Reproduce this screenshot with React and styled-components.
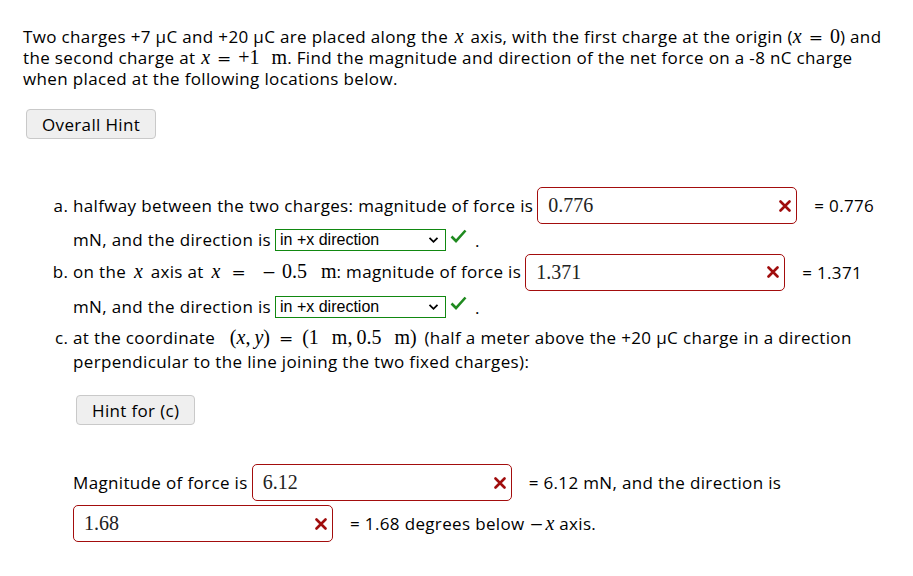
import React from "react";
import styled, { createGlobalStyle } from "styled-components";

const Global = createGlobalStyle`
  html, body { margin: 0; padding: 0; background: #fff; }
  body { font-family: "Open Sans", "Noto Sans", sans-serif; font-size: 17px; letter-spacing: 0.35px; color: #000; }
`;

const Page = styled.div`
  padding: 26px 23px 0 23px;
  width: 913px;
  box-sizing: border-box;
`;

const Intro = styled.p`
  margin: 0;
  line-height: 21px;
  width: 866px;
`;

const M = styled.span`
  font-family: ${(p) => (p.$op ? '"DejaVu Serif", serif' : '"Liberation Serif", "DejaVu Serif", serif')};
  font-size: ${(p) => (p.$op ? 17 : 20)}px;
  line-height: 1;
  letter-spacing: 0;
  font-style: ${(p) => (p.$i ? "italic" : "normal")};
  margin-left: ${(p) => p.$l || 0}px;
  margin-right: ${(p) => p.$r || 0}px;
`;

const HintButton = styled.button`
  font-family: inherit;
  font-size: 17px;
  letter-spacing: 0.35px;
  color: #000;
  background: #efefef;
  border: 1px solid #c9c9c9;
  border-radius: 4px;
  height: 30px;
  padding: 0 15px;
  margin: ${(p) => p.$m};
  display: block;
`;

const List = styled.ol`
  list-style: lower-alpha;
  margin: 48px 0 0 0;
  padding-left: 50px;
`;

const Item = styled.li``;

const Row = styled.div`
  display: flex;
  align-items: center;
  height: ${(p) => p.$h}px;
  margin-top: ${(p) => p.$mt || 0}px;
  white-space: nowrap;
`;

const Text = styled.span`
  line-height: 24px;
`;

const InputBox = styled.div`
  width: 260px;
  height: 37px;
  box-sizing: border-box;
  border: 1px solid #a30d0d;
  border-radius: 5px;
  display: flex;
  align-items: center;
  justify-content: space-between;
  padding: 0 5px 0 10px;
  margin-left: ${(p) => (p.$flush ? 0 : 4)}px;
  background: #fff;
`;

const Value = styled.span`
  font-family: "Liberation Serif", "DejaVu Serif", serif;
  font-size: 20px;
  letter-spacing: 0;
  color: #222;
`;

const Cross = styled.svg`
  width: 12px;
  height: 12px;
`;

const Echo = styled.span`
  margin-left: 17px;
`;

const Select = styled.div`
  width: 171px;
  height: 22px;
  box-sizing: border-box;
  border: 1px solid #118811;
  display: flex;
  align-items: center;
  justify-content: space-between;
  padding: 0 6px 0 4px;
  margin-left: 4px;
  font-family: "Liberation Sans", Arial, sans-serif;
  font-size: 16px;
  letter-spacing: 0;
  color: #000;
`;

const Check = styled.svg`
  width: 17px;
  height: 14px;
  margin: -8px 0 0 4px;
`;

const Dot = styled.span`
  margin-left: 8px;
`;

const Para = styled.div`
  line-height: 24px;
  margin-top: 8px;
`;

const XIcon = () => (
  <Cross viewBox="0 0 12 12">
    <path d="M1.5 1.5 L10.5 10.5 M10.5 1.5 L1.5 10.5" stroke="#a00d0d" strokeWidth="2.6" strokeLinecap="round" />
  </Cross>
);

const CheckIcon = () => (
  <Check viewBox="0 0 17 14">
    <path d="M1.5 7.5 L6 12 L15.5 1.5" fill="none" stroke="#1f8a1f" strokeWidth="2.6" />
  </Check>
);

const Chevron = () => (
  <svg width="11" height="8" viewBox="0 0 11 8">
    <path d="M1.5 1.8 L5.5 5.8 L9.5 1.8" fill="none" stroke="#000" strokeWidth="1.8" />
  </svg>
);

const Answer = ({ value, flush }) => (
  <InputBox $flush={flush}>
    <Value>{value}</Value>
    <XIcon />
  </InputBox>
);

const Direction = () => (
  <>
    <Select>
      <span>in +x direction</span>
      <Chevron />
    </Select>
    <CheckIcon />
    <Dot>.</Dot>
  </>
);

export default function App() {
  return (
    <Page>
      <Global />
      <Intro>
        Two charges +7 μC and +20 μC are placed along the <M $i $l={2} $r={2}>x</M> axis, with the first charge at the origin (
        <M $i>x</M>
        <M $op $l={7} $r={7}>=</M>
        <M>0</M>) and the second charge at <M $i $l={1}>x</M>
        <M $op $l={7} $r={7}>=</M>
        <M>+1</M>
        <M $l={12}>m</M>. Find the magnitude and direction of the net force on a -8 nC charge when placed at the following locations below.
      </Intro>
      <HintButton $m="20px 0 0 3px">Overall Hint</HintButton>
      <List>
        <Item>
          <Row $h={37}>
            <Text>halfway between the two charges: magnitude of force is</Text>
            <Answer value="0.776" />
            <Echo>= 0.776</Echo>
          </Row>
          <Row $h={22} $mt={5}>
            <Text>mN, and the direction is</Text>
            <Direction />
          </Row>
        </Item>
        <Item>
          <Row $h={36} $mt={3}>
            <Text>
              on the <M $i $l={3} $r={3}>x</M> axis at <M $i $l={3} $r={3}>x</M>
              <M $op $l={8} $r={10}>=</M>
              <M $op $l={6} $r={6}>−</M>
              <M>0.5</M>
              <M $l={14}>m</M>: magnitude of force is
            </Text>
            <Answer value="1.371" />
            <Echo>= 1.371</Echo>
          </Row>
          <Row $h={22} $mt={6}>
            <Text>mN, and the direction is</Text>
            <Direction />
          </Row>
        </Item>
        <Item>
          <Para>
            at the coordinate <M $l={10}>(</M>
            <M $i>x</M>
            <M $r={4}>,</M>
            <M $i>y</M>
            <M>)</M>
            <M $op $l={9} $r={9}>=</M>
            <M>(1</M>
            <M $l={13}>m</M>
            <M $r={4}>,</M>
            <M>0.5</M>
            <M $l={13}>m</M>
            <M $r={3}>)</M> (half a meter above the +20 μC charge in a direction perpendicular to the line joining the two fixed charges):
          </Para>
          <HintButton $m="21px 0 0 3px">Hint for (c)</HintButton>
          <Row $h={37} $mt={39}>
            <Text>Magnitude of force is</Text>
            <Answer value="6.12" />
            <Echo>= 6.12 mN, and the direction is</Echo>
          </Row>
          <Row $h={37} $mt={4}>
            <Answer value="1.68" flush />
            <Echo>
              = 1.68 degrees below <M $op $r={2}>−</M>
              <M $i>x</M> axis.
            </Echo>
          </Row>
        </Item>
      </List>
    </Page>
  );
}
